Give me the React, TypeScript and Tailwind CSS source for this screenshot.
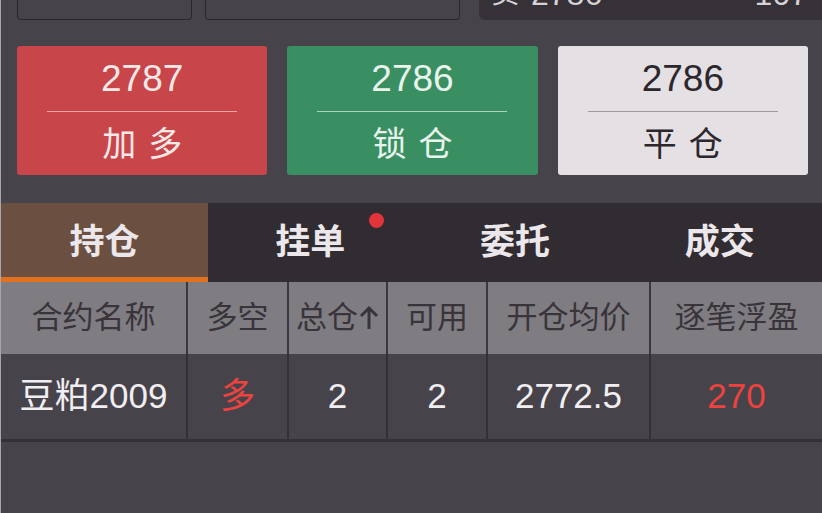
const font = { fontFamily: '"Liberation Sans", "Noto Sans CJK SC", sans-serif' };

const tabs = ['持仓', '挂单', '委托', '成交'];

const headers = ['合约名称', '多空', '总仓', '可用', '开仓均价', '逐笔浮盈'];

function ActionButton({ price, label, box, text, line }: { price: string; label: string; box: string; text: string; line: string }) {
  return (
    <div className={`flex h-[129px] flex-col items-center rounded-[3px] ${box} ${text}`}>
      <div className="flex h-[65px] items-center text-[37px] leading-none">{price}</div>
      <div className={`h-px w-[190px] ${line}`} />
      <div className="flex h-[63px] items-center pl-[12px] text-[34px] leading-none tracking-[12px]">{label}</div>
    </div>
  );
}

export default function App() {
  return (
    <div style={font} className="flex h-[513px] w-[822px] flex-col overflow-hidden border-l border-[#a9a6ab] bg-[#47434a]">
      {/* top strip, cut off by the screen edge */}
      <div className="flex h-[20px] shrink-0">
        <div className="ml-[16px] w-[175px] rounded-b-[4px] border border-t-0 border-[#2b272c]" />
        <div className="ml-[13px] w-[255px] rounded-b-[4px] border border-t-0 border-[#2b272c]" />
        <div className="ml-[19px] flex flex-1 justify-between overflow-hidden rounded-bl-[6px] bg-[#353136] pl-[12px] pr-[14px] text-[#d6d2d6]">
          <div className="-mt-[21px] flex h-[30px] items-center gap-[12px] text-[32px] leading-[30px]">
            <span className="text-[28px]">卖</span>
            <span>2786</span>
          </div>
          <div className="-mt-[21px] h-[30px] text-[32px] leading-[30px]">107</div>
        </div>
      </div>

      {/* action buttons */}
      <div className="mt-[26px] grid shrink-0 grid-cols-3 gap-[20px] pl-[16px] pr-[14px]">
        <ActionButton price="2787" label="加多" box="bg-[#c84549]" text="text-[#f7e8e8]" line="bg-[#e7a3a5]" />
        <ActionButton price="2786" label="锁仓" box="bg-[#3a8f62]" text="text-[#e8f4ec]" line="bg-[#a9d6ba]" />
        <ActionButton price="2786" label="平仓" box="bg-[#e4e0e4]" text="text-[#2b272c]" line="bg-[#9e9a9f]" />
      </div>

      {/* tabs */}
      <div className="mt-[28px] grid h-[79px] shrink-0 grid-cols-[207px_1fr_1fr_1fr] bg-[#302c31]">
        {tabs.map((t, i) => (
          <div
            key={t}
            className={`relative flex items-center justify-center text-[35px] font-bold text-[#ebe7ea] ${
              i === 0 ? 'border-b-[5px] border-[#e2711f] bg-[#6b4f41] pt-[5px]' : ''
            }`}
          >
            {t}
            {i === 1 && <span className="absolute left-[161px] top-[10px] h-[15px] w-[15px] rounded-full bg-[#e3343c]" />}
          </div>
        ))}
      </div>

      {/* table */}
      <div className="grid shrink-0 grid-cols-[187px_101px_99px_100px_163px_1fr]">
        {headers.map((h, i) => (
          <div
            key={h}
            className={`flex h-[72px] items-center justify-center bg-[#7f7c82] text-[31px] text-[#38343a] ${
              i < 5 ? 'border-r-2 border-[#3b373d]' : ''
            }`}
          >
            {h}
            {i === 2 && (
              <svg width="20" height="26" viewBox="0 0 20 26" className="ml-[1px]">
                <path d="M10 24V3M2 11l8-8 8 8" fill="none" stroke="#38343a" strokeWidth="3" />
              </svg>
            )}
          </div>
        ))}
        {['豆粕2009', '多', '2', '2', '2772.5', '270'].map((v, i) => (
          <div
            key={i}
            className={`flex h-[88px] items-center justify-center border-b-[3px] border-[#343035] text-[35px] ${
              i < 5 ? 'border-r-2' : ''
            } ${i === 1 || i === 5 ? 'text-[#ec4340]' : 'text-[#f1eef1]'}`}
          >
            {v}
          </div>
        ))}
      </div>
    </div>
  );
}
